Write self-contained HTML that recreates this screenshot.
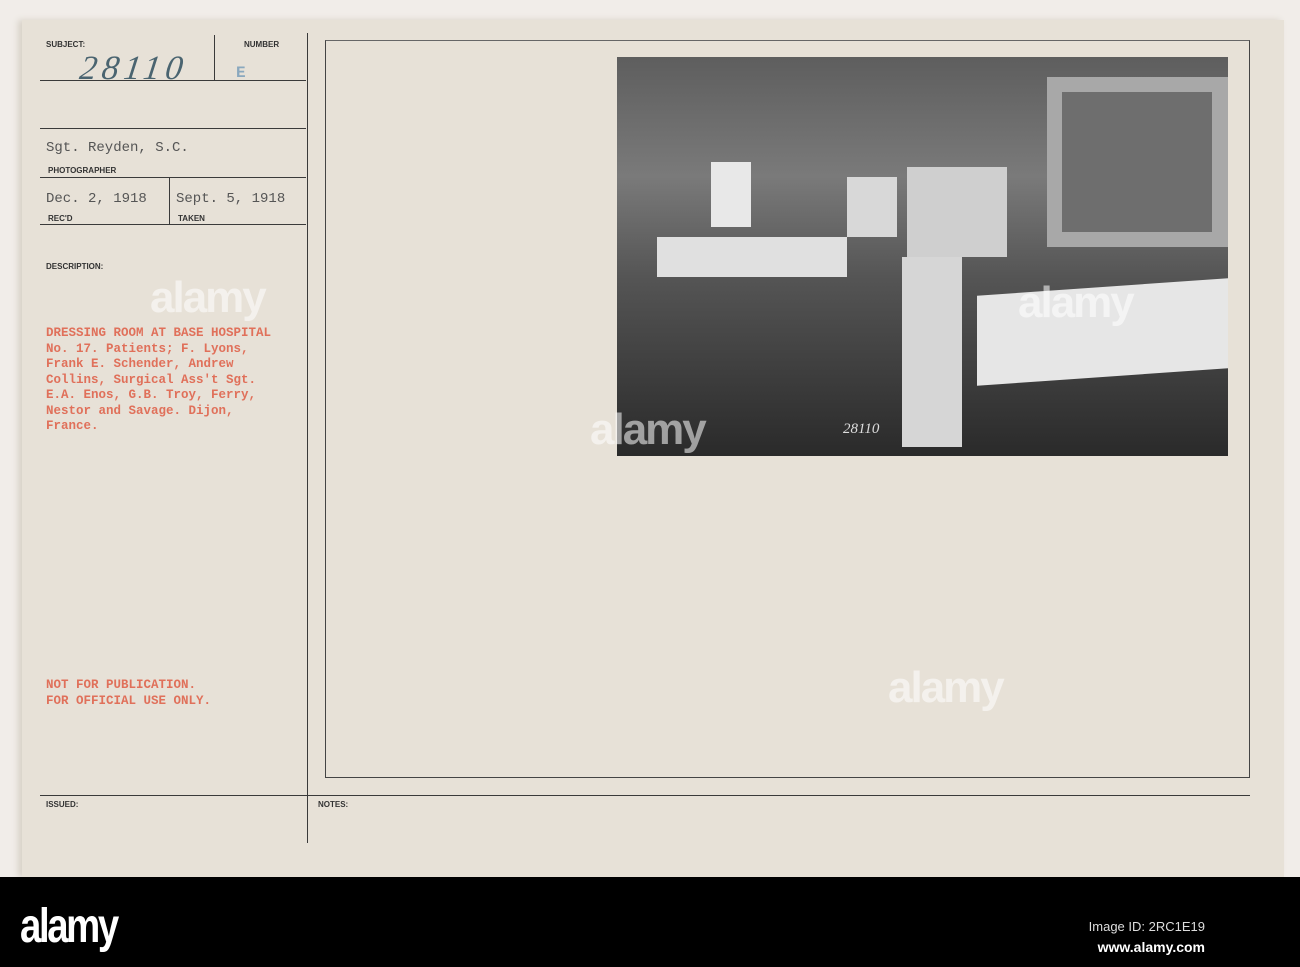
<!DOCTYPE html>
<html><head><style>
body{margin:0;width:1300px;height:967px;background:#f1ede9;position:relative;overflow:hidden;font-family:"Liberation Mono",monospace}
.card{position:absolute;left:22px;top:20px;width:1262px;height:857px;background:#e7e1d7;box-shadow:-4px 0 6px #d8d2c8}
.a{position:absolute}
.l{position:absolute;background:#3a3a3a}
.sm{position:absolute;font-family:"Liberation Sans",sans-serif;font-size:8px;font-weight:bold;color:#333}
.ty{position:absolute;font-size:14px;color:#555}
.red{position:absolute;font-size:12.5px;color:#e0705a;line-height:15.5px;font-weight:bold}
.foot{position:absolute;left:0;top:877px;width:1300px;height:90px;background:#000}
.wm{position:absolute;font-family:"Liberation Sans",sans-serif;font-weight:bold;color:rgba(255,255,255,.55);font-size:44px;letter-spacing:-2px}
</style></head><body>
<div class="card"></div>
<div class="l" style="left:40px;top:80px;width:266px;height:1px"></div>
<div class="l" style="left:214px;top:35px;width:1px;height:45px"></div>
<div class="l" style="left:40px;top:128px;width:266px;height:1px"></div>
<div class="l" style="left:40px;top:177px;width:266px;height:1px"></div>
<div class="l" style="left:169px;top:178px;width:1px;height:46px"></div>
<div class="l" style="left:40px;top:224px;width:266px;height:1px"></div>
<div class="l" style="left:307px;top:33px;width:1px;height:810px"></div>
<div class="a" style="left:325px;top:40px;width:923px;height:736px;border:1px solid #444;border-top:1px solid #666"></div>
<div class="l" style="left:40px;top:795px;width:1210px;height:1px"></div>
<div class="sm" style="left:46px;top:40px">SUBJECT:</div>
<div class="sm" style="left:244px;top:40px">NUMBER</div>
<div class="a" style="left:80px;top:50px;font-family:'Liberation Serif',serif;font-style:italic;font-size:34px;color:#4a6470;letter-spacing:5px;font-weight:normal;transform:skewX(-8deg)">28110</div>
<div class="a" style="left:236px;top:64px;font-size:16px;color:#8aa8be;font-weight:bold">E</div>
<div class="ty" style="left:46px;top:140px">Sgt. Reyden, S.C.</div>
<div class="sm" style="left:48px;top:166px">PHOTOGRAPHER</div>
<div class="ty" style="left:46px;top:191px">Dec. 2, 1918</div>
<div class="ty" style="left:176px;top:191px">Sept. 5, 1918</div>
<div class="sm" style="left:48px;top:214px">REC'D</div>
<div class="sm" style="left:178px;top:214px">TAKEN</div>
<div class="sm" style="left:46px;top:262px">DESCRIPTION:</div>
<div class="red" style="left:46px;top:326px">DRESSING ROOM AT BASE HOSPITAL<br>No. 17. Patients; F. Lyons,<br>Frank E. Schender, Andrew<br>Collins, Surgical Ass't Sgt.<br>E.A. Enos, G.B. Troy, Ferry,<br>Nestor and Savage. Dijon,<br>France.</div>
<div class="red" style="left:46px;top:678px">NOT FOR PUBLICATION.<br>FOR OFFICIAL USE ONLY.</div>
<div class="sm" style="left:46px;top:800px">ISSUED:</div>
<div class="sm" style="left:318px;top:800px">NOTES:</div>
<div class="a" style="left:617px;top:57px;width:611px;height:399px;overflow:hidden;background:linear-gradient(180deg,#5e5e5e 0%,#7a7a7a 30%,#555 55%,#2a2a2a 100%)">
 <div class="a" style="left:430px;top:20px;width:181px;height:170px;background:#a8a8a8"></div>
 <div class="a" style="left:445px;top:35px;width:150px;height:140px;background:#6e6e6e"></div>
 <div class="a" style="left:40px;top:180px;width:190px;height:40px;background:#e0e0e0"></div>
 <div class="a" style="left:94px;top:105px;width:40px;height:65px;background:#e8e8e8"></div>
 <div class="a" style="left:230px;top:120px;width:50px;height:60px;background:#d8d8d8"></div>
 <div class="a" style="left:290px;top:110px;width:100px;height:90px;background:#cfcfcf"></div>
 <div class="a" style="left:285px;top:200px;width:60px;height:190px;background:#d6d6d6"></div>
 <div class="a" style="left:360px;top:230px;width:251px;height:90px;background:#e6e6e6;transform:skewY(-4deg)"></div>
 <div class="a" style="left:226px;top:364px;font-family:'Liberation Serif',serif;font-style:italic;font-size:15px;color:#ddd">28110</div>
</div>
<div class="wm" style="left:150px;top:273px">alamy</div>
<div class="wm" style="left:590px;top:405px">alamy</div>
<div class="wm" style="left:1018px;top:278px">alamy</div>
<div class="wm" style="left:888px;top:663px">alamy</div>
<div class="foot">
 <div class="a" style="left:20px;top:22px;font-family:'Liberation Sans',sans-serif;font-weight:bold;font-size:48px;color:#fff;letter-spacing:-3px;transform:scaleX(.8);transform-origin:left">alamy</div>
 <div class="a" style="right:95px;top:42px;font-family:'Liberation Sans',sans-serif;font-size:13px;color:#ddd">Image ID: 2RC1E19</div>
 <div class="a" style="right:95px;top:62px;font-family:'Liberation Sans',sans-serif;font-size:14px;font-weight:bold;color:#fff">www.alamy.com</div>
</div>
</body></html>
